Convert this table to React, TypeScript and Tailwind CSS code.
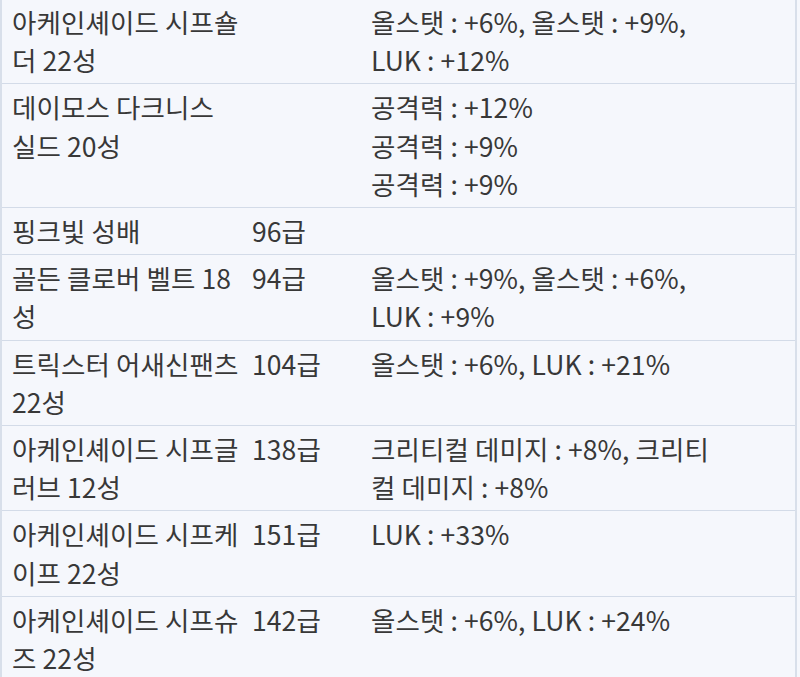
import React from "react";

const rows: { name: string[]; grade: string; opts: string[] }[] = [
  { name: ["아케인셰이드 시프숄", "더 22성"], grade: "", opts: ["올스탯 : +6%, 올스탯 : +9%,", "LUK : +12%"] },
  { name: ["데이모스 다크니스", "실드 20성"], grade: "", opts: ["공격력 : +12%", "공격력 : +9%", "공격력 : +9%"] },
  { name: ["핑크빛 성배"], grade: "96급", opts: [] },
  { name: ["골든 클로버 벨트 18", "성"], grade: "94급", opts: ["올스탯 : +9%, 올스탯 : +6%,", "LUK : +9%"] },
  { name: ["트릭스터 어새신팬츠", "22성"], grade: "104급", opts: ["올스탯 : +6%, LUK : +21%"] },
  { name: ["아케인셰이드 시프글", "러브 12성"], grade: "138급", opts: ["크리티컬 데미지 : +8%, 크리티", "컬 데미지 : +8%"] },
  { name: ["아케인셰이드 시프케", "이프 22성"], grade: "151급", opts: ["LUK : +33%"] },
  { name: ["아케인셰이드 시프슈", "즈 22성"], grade: "142급", opts: ["올스탯 : +6%, LUK : +24%"] },
];

export default function App() {
  return (
    <div
      className="w-[800px] h-[677px] overflow-hidden bg-[#f5f7fc] text-[#383838]"
      style={{ fontFamily: '"Noto Sans CJK KR", "Noto Sans", sans-serif' }}
    >
      <div className="border-l-2 border-r-2 border-[#d8dfea] w-[797px] text-[26.5px] leading-[38.2px] tracking-[0.1px]">
        {rows.map((r, i) => (
          <div
            key={i}
            className={`grid grid-cols-[240px_119px_1fr] ${i === 0 ? "-mt-[1px]" : "border-t border-[#d3dbe8]"}`}
          >
            <div className="pl-[10px] py-[4px] whitespace-nowrap">
              {r.name.map((n, j) => (
                <div key={j}>{n}</div>
              ))}
            </div>
            <div className="pl-[10px] py-[4px] whitespace-nowrap">{r.grade}</div>
            <div className="pl-[10px] py-[4px] whitespace-nowrap">
              {r.opts.map((o, j) => (
                <div key={j}>{o}</div>
              ))}
            </div>
          </div>
        ))}
      </div>
    </div>
  );
}
